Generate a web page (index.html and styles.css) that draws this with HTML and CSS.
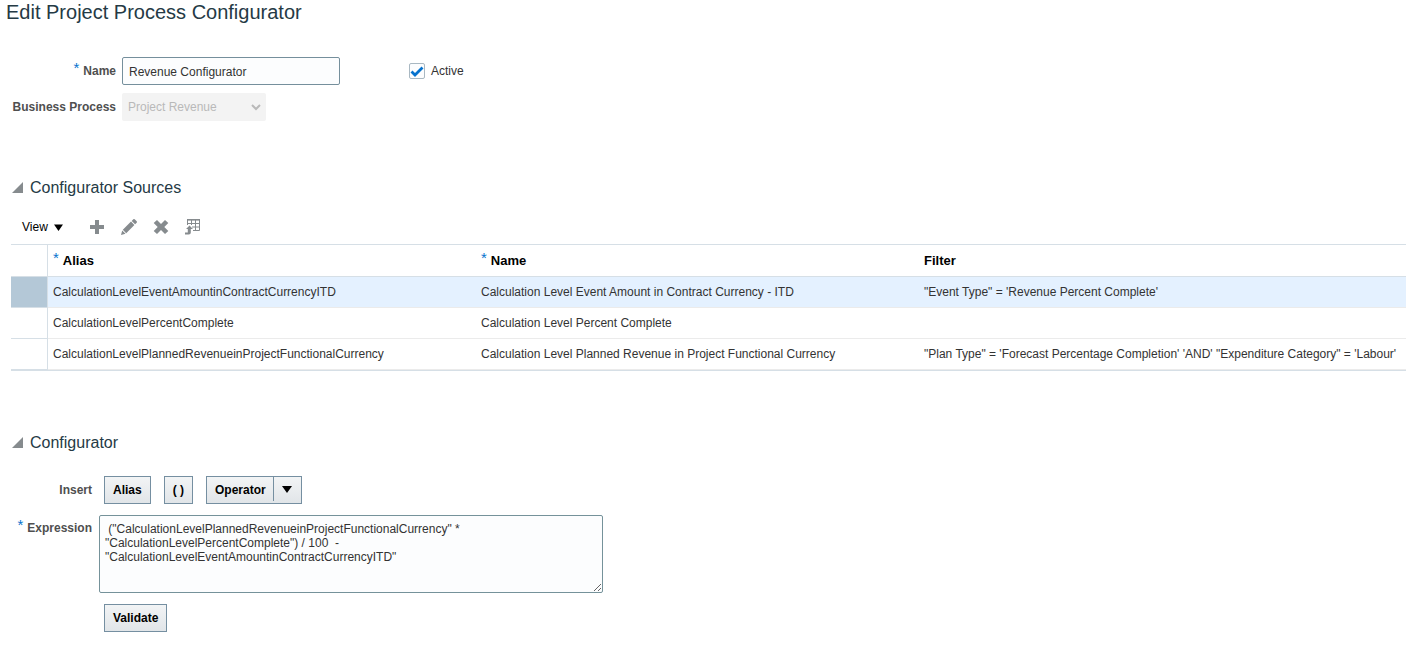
FILE: index.html
```html
<!DOCTYPE html>
<html lang="en">
<head>
<meta charset="utf-8">
<title>Edit Project Process Configurator</title>
<link rel="stylesheet" href="styles.css">
</head>
<body>
<main class="page">
  <h1 class="page-title">Edit Project Process Configurator</h1>

  <form class="details">
    <label class="field-label" for="name"><span class="required">*</span>Name</label>
    <div class="field-row">
      <input class="text-input" id="name" type="text" value="Revenue Configurator">
      <div class="check-field">
        <input class="checkbox" id="active" type="checkbox" checked>
        <label for="active">Active</label>
      </div>
    </div>
    <label class="field-label" for="process">Business Process</label>
    <div class="field-row">
      <div class="select-wrap">
        <select class="select" id="process" disabled><option>Project Revenue</option></select>
        <svg class="select-arrow" width="10" height="8" viewBox="0 0 10 8" aria-hidden="true"><path d="M1 2l4 4 4-4" fill="none" stroke="#b9b9b9" stroke-width="2"/></svg>
      </div>
    </div>
  </form>

  <section class="sources">
    <h2 class="section-title">
      <svg width="11" height="11" viewBox="0 0 11 11" aria-hidden="true"><path d="M11 0v11H0z" fill="#868b8e"/></svg>
      Configurator Sources
    </h2>
    <div class="toolbar">
      <button class="view-button" type="button">View
        <svg width="10" height="7" viewBox="0 0 10 7" aria-hidden="true"><path d="M0 0.500h9L4.500 7z"/></svg>
      </button>
      <button class="icon-button" type="button" aria-label="Add">
        <svg width="16" height="16" viewBox="0 0 16 16"><path d="M6 1h4v5h5v4h-5v5H6v-5H1V6h5z" fill="#868b8e"/></svg>
      </button>
      <button class="icon-button" type="button" aria-label="Edit">
        <svg width="16" height="16" viewBox="0 0 16 16"><path d="M0 16l1.200-4.500 3.300 3.300zM1.800 10.800L10 2.600l3.400 3.400-8.200 8.200zM10.700 1.900L12.300.3q.7-.5 1.400 0l2 2q.5.700 0 1.400l-1.600 1.600z" fill="#868b8e"/></svg>
      </button>
      <button class="icon-button" type="button" aria-label="Delete">
        <svg width="16" height="16" viewBox="0 0 16 16"><path d="M.7 4L4 1l4 4 4-4 3.300 3-4 4 4 4-3.300 3-4-4-4 4-3.300-3 4-4z" fill="#868b8e"/></svg>
      </button>
      <button class="icon-button" type="button" aria-label="Detach">
        <svg width="16" height="16" viewBox="0 0 16 16"><path d="M2.500 6V.5h12v11H8M2.500 4.500h12M7 8h7.500M6.500 1v5M10.500 1v10.500" fill="none" stroke="#868b8e"/><path d="M2 .8h13" stroke="#868b8e" stroke-width="1.600"/><path d="M0 13.500h2.800V10H1l3.500-3.500L8 10H5.800v3.500q0 2-2 2H0z" fill="#868b8e"/></svg>
      </button>
    </div>
    <table class="grid">
      <colgroup><col class="col-handle"><col class="col-alias"><col class="col-name"><col></colgroup>
      <thead>
        <tr>
          <td></td>
          <th scope="col"><span class="required">*</span>Alias</th>
          <th scope="col"><span class="required">*</span>Name</th>
          <th scope="col">Filter</th>
        </tr>
      </thead>
      <tbody>
        <tr class="selected">
          <td></td>
          <td>CalculationLevelEventAmountinContractCurrencyITD</td>
          <td>Calculation Level Event Amount in Contract Currency - ITD</td>
          <td>"Event Type" = 'Revenue Percent Complete'</td>
        </tr>
        <tr>
          <td></td>
          <td>CalculationLevelPercentComplete</td>
          <td>Calculation Level Percent Complete</td>
          <td></td>
        </tr>
        <tr>
          <td></td>
          <td>CalculationLevelPlannedRevenueinProjectFunctionalCurrency</td>
          <td>Calculation Level Planned Revenue in Project Functional Currency</td>
          <td>"Plan Type" = 'Forecast Percentage Completion' 'AND' "Expenditure Category" = 'Labour'</td>
        </tr>
      </tbody>
    </table>
  </section>

  <section class="configurator">
    <h2 class="section-title">
      <svg width="11" height="11" viewBox="0 0 11 11" aria-hidden="true"><path d="M11 0v11H0z" fill="#868b8e"/></svg>
      Configurator
    </h2>
    <div class="builder">
      <span class="field-label" id="insert-label">Insert</span>
      <div class="button-row" role="group" aria-labelledby="insert-label">
        <button class="button" type="button">Alias</button>
        <button class="button" type="button">( )</button>
        <div class="split-button">
          <button class="split-main" type="button">Operator</button>
          <button class="split-menu" type="button" aria-label="Operator list">
            <svg width="10" height="7" viewBox="0 0 10 7"><path d="M0 0h10L5 7z"/></svg>
          </button>
        </div>
      </div>
      <label class="field-label label-top" for="expression"><span class="required">*</span>Expression</label>
      <textarea class="expression" id="expression" spellcheck="false"> ("CalculationLevelPlannedRevenueinProjectFunctionalCurrency" * "CalculationLevelPercentComplete") / 100  - "CalculationLevelEventAmountinContractCurrencyITD"</textarea>
      <div class="button-row validate-row">
        <button class="button" type="button">Validate</button>
      </div>
    </div>
  </section>
</main>
</body>
</html>
```
FILE: styles.css
```css
* {
  box-sizing: border-box;
}

body {
  margin: 0;
  background: #fff;
  color: #333;
  font-family: "Liberation Sans", Arial, sans-serif;
  font-size: 12px;
  line-height: 14px;
}

button,
input,
select,
textarea {
  margin: 0;
  color: inherit;
  font: inherit;
}

svg {
  display: block;
  flex: none;
}

.page-title {
  margin: 0;
  padding-left: 6px;
  color: #253a45;
  font-size: 20px;
  font-weight: 400;
  line-height: 24px;
}

.details {
  display: grid;
  grid-template-columns: 116px 1fr;
  gap: 8px 6px;
  align-items: center;
  margin-top: 33px;
}

.field-label {
  color: #4f4f4f;
  font-weight: 700;
  text-align: right;
}

.required {
  margin-right: 4px;
  color: #0572ce;
  font-size: 15px;
  font-weight: 400;
  line-height: 8px;
  vertical-align: 2px;
}

.field-row {
  display: flex;
  align-items: center;
}

.text-input {
  width: 218px;
  height: 28px;
  padding: 2px 6px 0;
  border: 1px solid #758f9c;
  border-radius: 2px;
  background: #fcfdfe;
}

.check-field {
  display: flex;
  align-items: center;
  gap: 6px;
  margin-left: 69px;
}

.checkbox {
  appearance: none;
  width: 16px;
  height: 16px;
  border: 1px solid #a9b8c2;
  border-radius: 2px;
  background: #fcfdfe url("data:image/svg+xml,%3Csvg xmlns='http://www.w3.org/2000/svg' viewBox='0 0 14 14'%3E%3Cpath d='M1.500 7.500l3.500 3.500L12.500 3.500' fill='none' stroke='%230572ce' stroke-width='2.800'/%3E%3C/svg%3E") center / 14px no-repeat;
}

.select-wrap {
  display: grid;
  width: 144px;
  align-items: center;
}

.select {
  grid-area: 1 / 1;
  appearance: none;
  height: 28px;
  padding: 0 6px;
  border: 0;
  border-radius: 2px;
  background: #f3f3f3;
  color: #b9b9b9;
  opacity: 1;
}

.select-arrow {
  grid-area: 1 / 1;
  justify-self: end;
  z-index: 1;
  margin-right: 5px;
  pointer-events: none;
}

.sources {
  margin-top: 56px;
}

.section-title {
  display: flex;
  align-items: center;
  gap: 7px;
  margin: 0;
  padding-left: 12px;
  color: #253a45;
  font-size: 16px;
  font-weight: 400;
  line-height: 22px;
}

.section-title svg {
  margin-bottom: 2px;
}

.toolbar {
  display: flex;
  align-items: center;
  gap: 16px;
  height: 20px;
  margin: 18px 0 7px;
  padding-left: 22px;
}

.view-button,
.icon-button {
  display: flex;
  align-items: center;
  gap: 6px;
  padding: 0;
  border: 0;
  background: none;
}

.view-button {
  margin-right: 9px;
  color: #000;
}

.grid {
  width: calc(100% - 11px);
  margin-left: 11px;
  border-bottom: 1px solid #d6dfe6;
  border-spacing: 0;
  table-layout: fixed;
}

.col-handle {
  width: 37px;
}

.col-alias {
  width: 428px;
}

.col-name {
  width: 443px;
}

.grid td,
.grid th {
  height: 31px;
  padding: 0 5px;
  border-bottom: 1px solid #ebebeb;
  text-align: left;
  white-space: nowrap;
}

.grid thead td,
.grid thead th {
  height: 33px;
  border-top: 1px solid #d6dfe6;
  border-bottom-color: #d6dfe6;
  color: #000;
  font-size: 13px;
}

.grid td:first-child {
  border-right: 1px solid #d6dfe6;
  border-bottom-color: #d6dfe6;
}

.grid .selected td {
  background: #e4f1ff;
}

.grid .selected td:first-child {
  background: #b4c8d7;
}

.configurator {
  margin-top: 61px;
}

.builder {
  display: grid;
  grid-template-columns: 92px 1fr;
  gap: 11px 7px;
  align-items: center;
  margin-top: 22px;
}

.label-top {
  align-self: start;
  padding-top: 6px;
}

.button-row {
  display: flex;
  gap: 13px;
  padding-left: 5px;
}

.validate-row {
  grid-column: 2;
}

.button,
.split-button {
  height: 28px;
  border: 1px solid #758fa1;
  background: linear-gradient(#f2f4f5, #e1e5e8);
}

.button {
  padding: 0 8px;
  color: #000;
  font-weight: 700;
}

.split-button {
  display: flex;
  align-items: flex-start;
}

.split-main,
.split-menu {
  border: 0;
  background: none;
}

.split-main {
  height: 26px;
  padding: 0 7px 0 8px;
  color: #000;
  font-weight: 700;
}

.split-menu {
  height: 24px;
  padding: 0 9px 0 8px;
  border-left: 1px solid #758fa1;
}

.expression {
  width: 504px;
  height: 78px;
  padding: 6px 5px 4px;
  border: 1px solid #75929a;
  border-radius: 2px;
  background: #fcfdfe;
}
```
